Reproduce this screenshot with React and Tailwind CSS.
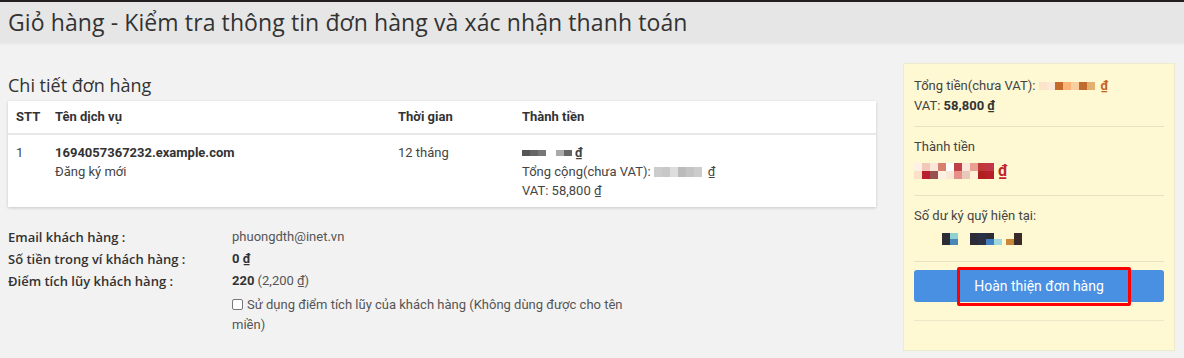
import React from "react";

const Blob = ({ cells, h = "h-[7px]" }) => (
  <span className="inline-flex flex-col align-middle">
    {cells.map((row, i) => (
      <span key={i} className="flex">
        {row.map((c, j) => (
          <span key={j} className={`${h} w-[8px]`} style={{ background: c }} />
        ))}
      </span>
    ))}
  </span>
);

export default function App() {
  const roboto = { fontFamily: "Roboto, 'Liberation Sans', sans-serif" };
  return (
    <div className="w-[1184px] h-[358px] bg-[#f2f2f2] overflow-hidden text-[#333]" style={roboto}>
      <div className="h-[2px] bg-[#231f20]" />
      <div className="h-[41px] bg-[#e6e6e6] flex items-center px-[8px]">
        <h1 className="text-[23px] text-[#333] tracking-[0.1px]" style={{ fontFamily: "'Open Sans', sans-serif" }}>
          Giỏ hàng - Kiểm tra thông tin đơn hàng và xác nhận thanh toán
        </h1>
      </div>
      <div className="h-[2px] bg-[#ececec]" />
      <div className="flex pl-[8px] pr-[9px] pt-[18px] gap-[27px]">
        <div className="w-[868px]">
          <h2 className="text-[18px] leading-[26px] mt-[9px] text-[#333]" style={{ fontFamily: "'Open Sans', sans-serif" }}>Chi tiết đơn hàng</h2>
          <div className="mt-[3px] bg-white shadow-[0_1px_3px_rgba(0,0,0,0.18)] text-[13px]">
            <div className="flex h-[34px] items-center font-bold text-[#333] border-b-2 border-[#e8e8e8]">
              <div className="w-[47px] pl-[8px]">STT</div>
              <div className="w-[343px]">Tên dịch vụ</div>
              <div className="w-[124px]">Thời gian</div>
              <div>Thành tiền</div>
            </div>
            <div className="flex h-[72px] pt-[8px] leading-[19px] text-[#444]">
              <div className="w-[47px] pl-[8px]">1</div>
              <div className="w-[343px]">
                <div className="font-bold text-[#333]">1694057367232.example.com</div>
                <div>Đăng ký mới</div>
              </div>
              <div className="w-[124px]">12 tháng</div>
              <div>
                <div className="flex items-center gap-[2px] font-bold">
                  <Blob cells={[["#555", "#666", "#777"]]} h="h-[6px]" />
                  <span className="w-[6px]" />
                  <Blob cells={[["#aaa", "#666"]]} h="h-[6px]" />
                  <span className="underline ml-[1px]">₫</span>
                </div>
                <div className="flex items-center">
                  Tổng cộng(chưa VAT):&nbsp;
                  <Blob cells={[["#ccc", "#c8c8c8", "#ddd", "#bbb", "#c4c4c4", "#ccc"]]} h="h-[10px]" />
                  <span className="ml-[6px]">₫</span>
                </div>
                <div>VAT: 58,800 ₫</div>
              </div>
            </div>
          </div>
          <div className="mt-[19px] text-[13px] leading-[22px]">
            <div className="flex">
              <div className="w-[224px] font-semibold text-[#333]" style={{ fontFamily: "'Open Sans', sans-serif" }}>Email khách hàng :</div>
              <div className="text-[#555]">phuongdth@inet.vn</div>
            </div>
            <div className="flex">
              <div className="w-[224px] font-semibold text-[#333]" style={{ fontFamily: "'Open Sans', sans-serif" }}>Số tiền trong ví khách hàng :</div>
              <div className="font-bold">0 <span className="underline">₫</span></div>
            </div>
            <div className="flex">
              <div className="w-[224px] font-semibold text-[#333]" style={{ fontFamily: "'Open Sans', sans-serif" }}>Điểm tích lũy khách hàng :</div>
              <div className="text-[#555]"><span className="font-bold text-[#333]">220</span> (2,200 ₫)</div>
            </div>
            <div className="flex mt-[3px]">
              <div className="w-[224px]" />
              <div className="w-[410px] text-[#555] leading-[20px]">
                <span className="inline-block w-[11px] h-[11px] border border-[#777] rounded-[2px] bg-white align-[-1px] mr-[4px]" />
                Sử dụng điểm tích lũy của khách hàng (Không dùng được cho tên miền)
              </div>
            </div>
          </div>
        </div>
        <div className="w-[272px] h-[288px] bg-[#fef8d3] border border-[#eeeacc] px-[10px] text-[13px] text-[#444]">
          <div className="pt-[12px] pb-[10px] leading-[20px] border-b border-[#e8e2c0]">
            <div className="flex items-center">
              Tổng tiền(chưa VAT):&nbsp;
              <Blob cells={[["#fbe3cc", "#fde8d8", "#c46a2a", "#fbb478", "#f8cf9e", "#c06a30", "#e3b070"]]} h="h-[8px]" />
              <span className="ml-[6px] font-bold text-[#c8621e] underline">₫</span>
            </div>
            <div>VAT: <span className="font-bold text-[#333]">58,800 <span className="underline">₫</span></span></div>
          </div>
          <div className="pt-[10px] pb-[14px] leading-[20px] border-b border-[#e8e2c0]">
            <div>Thành tiền</div>
            <div className="flex items-center mt-[4px]">
              <Blob cells={[["#fff0e6", "#f2c8b8", "#fbe6da", "#d88070", "#fff", "#c0404a", "#fbe6da", "#e8a090", "#c03838", "#c03848"], ["#fde0c8", "#b82030", "#985050", "#fff0e0", "#f8e8d8", "#e89088", "#e8c8b8", "#fff0d8", "#b02020", "#b82028"]]} h="h-[8px]" />
              <span className="ml-[4px] text-[16px] font-bold text-[#c0282d] underline">₫</span>
            </div>
          </div>
          <div className="pt-[10px] pb-[16px] leading-[20px] border-b border-[#e8e2c0]">
            <div>Số dư ký quỹ hiện tại:</div>
            <div className="flex items-center mt-[7px] pl-[20px]">
              <Blob cells={[["#fff7d0", "#2c2c34", "#90d0d0"], ["#fff7d0", "#2c2c34", "#4888b8"]]} h="h-[6px]" />
              <span className="w-[12px]" />
              <Blob cells={[["#2c2c38", "#283048", "#2c2c34"], ["#2c2c38", "#2c3040", "#4080c0", "#a0d8e0"]]} h="h-[6px]" />
              <span className="w-[4px]" />
              <Blob cells={[["#fff7d0", "#3a2a2a"], ["#c88838", "#3a2a2a"]]} h="h-[6px]" />
            </div>
          </div>
          <div className="pt-[8px] pb-[18px] border-b border-[#ede7c8]">
            <div className="relative h-[32px] bg-[#4a90e2] rounded-[3px] flex items-center justify-center text-white text-[14px]">
              Hoàn thiện đơn hàng
              <div className="absolute left-[43px] top-[-3px] w-[174px] h-[39px] border-[3px] border-[#ff0000] rounded-[2px]" />
            </div>
          </div>
        </div>
      </div>
    </div>
  );
}
